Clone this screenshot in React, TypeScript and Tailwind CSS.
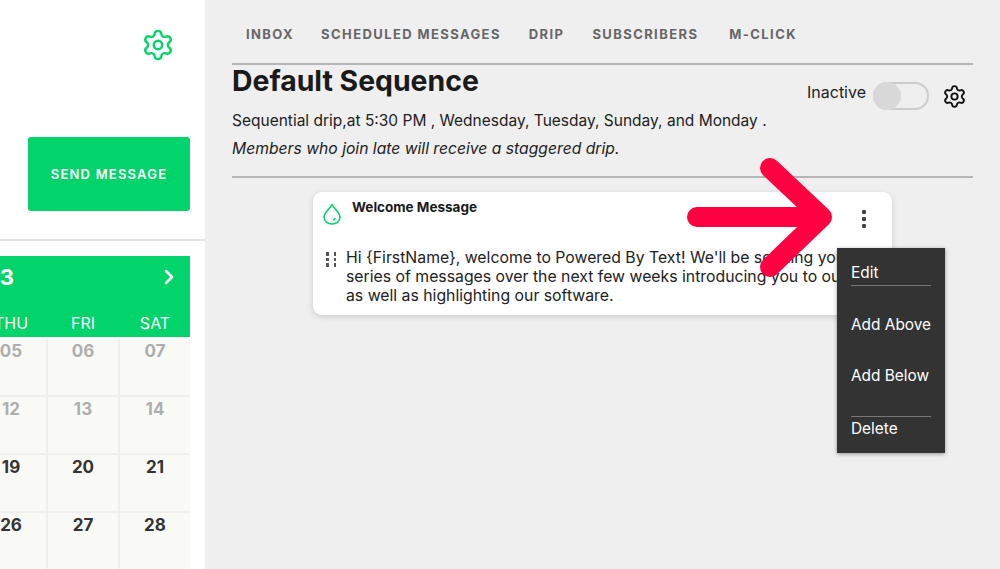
import React from 'react';
import { Settings, ChevronRight } from 'lucide-react';

const tabs = [
  { label: 'INBOX', ml: 'ml-0' },
  { label: 'SCHEDULED MESSAGES', ml: 'ml-[27px]' },
  { label: 'DRIP', ml: 'ml-[28px]' },
  { label: 'SUBSCRIBERS', ml: 'ml-[28px]' },
  { label: 'M-CLICK', ml: 'ml-[31px]' },
];

const dayNames = ['SUN', 'MON', 'TUE', 'WED', 'THU', 'FRI', 'SAT'];

const weeks = [
  ['01', '02', '03', '04', '05', '06', '07'],
  ['08', '09', '10', '11', '12', '13', '14'],
  ['15', '16', '17', '18', '19', '20', '21'],
  ['22', '23', '24', '25', '26', '27', '28'],
];

const Calendar = () => (
  <div className="flex justify-end pr-[15px] mt-[15px]">
    <div className="w-[504px] shrink-0">
      <div className="bg-[#03d36b] text-white h-[81px]">
        <div className="flex items-center justify-end h-[42px] pr-[9px]">
          <span className="font-bold text-[22px] mr-[143px] whitespace-nowrap">January 2023</span>
          <ChevronRight size={24} strokeWidth={2.5} />
        </div>
        <div className="grid grid-cols-7 mt-[15px]">
          {dayNames.map((d) => (
            <div key={d} className="text-center text-[16px] leading-[20px] pl-[2px]">{d}</div>
          ))}
        </div>
      </div>
      <div className="mt-[2px]">
        {weeks.map((week, i) => (
          <div key={i} className="grid grid-cols-7 h-[58px]">
            {week.map((day) => (
              <div
                key={day}
                className={`bg-[#f9faf6] border-l-2 border-b-2 border-[#efefef] text-center text-[17px] font-bold leading-[24px] ${
                  i < 2 ? 'text-[#aeaeae]' : 'text-[#333333]'
                }`}
              >
                {day}
              </div>
            ))}
          </div>
        ))}
      </div>
    </div>
  </div>
);

const DropdownMenu = () => (
  <div className="absolute left-[524px] top-[56px] w-[108px] h-[205px] bg-[#333333] text-white text-[15.4px] shadow-[0_1px_4px_rgba(0,0,0,0.4)] px-[14px] z-10">
    <div className="mt-[15px] leading-[20px] w-[80px]">Edit</div>
    <div className="mt-[2px] w-[80px] h-px bg-[#777777]" />
    <div className="mt-[29px] leading-[20px] whitespace-nowrap">Add Above</div>
    <div className="mt-[31px] leading-[20px] whitespace-nowrap">Add Below</div>
    <div className="mt-[30px] w-[80px] h-px bg-[#777777]" />
    <div className="mt-[2px] leading-[20px]">Delete</div>
  </div>
);

const DropIcon = () => (
  <svg width="20" height="22" viewBox="0 0 20 22" fill="none" stroke="#03d36b" strokeWidth="1.6" strokeLinecap="round" strokeLinejoin="round" className="mt-[4px] shrink-0">
    <path d="M10 1.5 C8.6 5 2 9.6 2 14.2 C2 18.2 5.6 21 10 21 C14.4 21 18 18.2 18 14.2 C18 9.6 11.4 5 10 1.5 Z" />
    <path d="M13 15.6 L11.6 17" />
  </svg>
);

const MessageCard = () => (
  <div className="relative ml-[81px] mt-[14px] w-[579px] h-[123px] bg-white rounded-[9px] shadow-[0_2px_6px_rgba(0,0,0,0.14)]">
    <div className="flex pl-[9px] pt-[7px]">
      <DropIcon />
      <span className="ml-[10px] text-[13.5px] font-bold text-[#1a1a1a] leading-[16px]">Welcome Message</span>
      <div className="ml-auto mr-[26px] mt-[11px] flex flex-col gap-[3px]">
        <span className="block w-[4px] h-[4px] bg-[#444444] rounded-[1px]" />
        <span className="block w-[4px] h-[4px] bg-[#444444] rounded-[1px]" />
        <span className="block w-[4px] h-[4px] bg-[#444444] rounded-[1px]" />
      </div>
    </div>
    <div className="flex mt-[20px] pl-[13px]">
      <div className="grid grid-cols-2 gap-x-[5px] gap-y-[2px] w-[10px] h-[14px] mt-[4px] shrink-0">
        {[0, 1, 2, 3, 4, 5].map((n) => (
          <span key={n} className="block w-[2.5px] h-[3.5px] bg-[#555555]" />
        ))}
      </div>
      <p className="ml-[10px] w-[535px] whitespace-nowrap text-[15.8px] leading-[19px] text-[#222222]">
        Hi {'{FirstName}'}, welcome to Powered By Text! We'll be sending you a<br />
        series of messages over the next few weeks introducing you to our team<br />
        as well as highlighting our software.
      </p>
    </div>
    <DropdownMenu />
  </div>
);

const App: React.FC = () => {
  return (
    <div
      className="relative w-[1000px] h-[569px] overflow-hidden flex bg-[#efefef]"
      style={{ fontFamily: 'Inter, "Liberation Sans", sans-serif' }}
    >
      <aside className="w-[205px] shrink-0 bg-white overflow-hidden">
        <div className="flex justify-end pr-[30px] pt-[28px]">
          <Settings size={34} strokeWidth={1.7} className="text-[#03d36b]" />
        </div>
        <div className="flex justify-end pr-[15px] mt-[75px]">
          <button className="w-[162px] h-[74px] pt-[1px] bg-[#03d36b] rounded-[3px] text-white text-[13px] font-semibold tracking-[1.2px]">
            SEND MESSAGE
          </button>
        </div>
        <div className="mt-[28px] h-[2px] bg-[#e2e2e2]" />
        <Calendar />
      </aside>

      <main className="flex-1 pl-[27px] pr-[27px]">
        <nav className="flex pl-[14px] pt-[26px] h-[65px] border-b-2 border-[#b5b5b5] text-[13px] font-bold tracking-[1.4px] text-[#666666] leading-[16px]">
          {tabs.map((t) => (
            <span key={t.label} className={t.ml}>{t.label}</span>
          ))}
        </nav>
        <div className="h-[113px] border-b-2 border-[#b5b5b5] relative">
          <h1 className="text-[28.4px] font-bold leading-[32px] text-[#1a1a1a]">Default Sequence</h1>
          <p className="mt-[14px] text-[15.5px] leading-[20px] text-[#222222]">
            Sequential drip,at 5:30 PM , Wednesday, Tuesday, Sunday, and Monday .
          </p>
          <p className="mt-[8px] text-[15.7px] leading-[20px] italic text-[#222222]">
            Members who join late will receive a staggered drip.
          </p>
          <div className="absolute top-[17px] right-[6px] flex items-center">
            <span className="text-[16px] text-[#222222] mr-[7px] -mt-[9px]">Inactive</span>
            <div className="w-[56px] h-[28px] rounded-full border-2 border-[#cccccc]">
              <div className="-ml-[2px] -mt-[2px] w-[28px] h-[28px] rounded-full bg-[#d8d8d8]" />
            </div>
            <Settings size={25} strokeWidth={1.8} className="ml-[13px] text-[#111111]" />
          </div>
        </div>
        <MessageCard />
      </main>

      {/* annotation arrow, sits over the card */}
      <svg className="absolute left-0 top-0 z-20 pointer-events-none" width="1000" height="569" viewBox="0 0 1000 569" fill="none">
        <path
          d="M697 217 H822 M770 168 L822 217 L770 267"
          stroke="#ff0040"
          strokeWidth="20"
          strokeLinecap="round"
          strokeLinejoin="round"
        />
      </svg>
    </div>
  );
};

export default App;
